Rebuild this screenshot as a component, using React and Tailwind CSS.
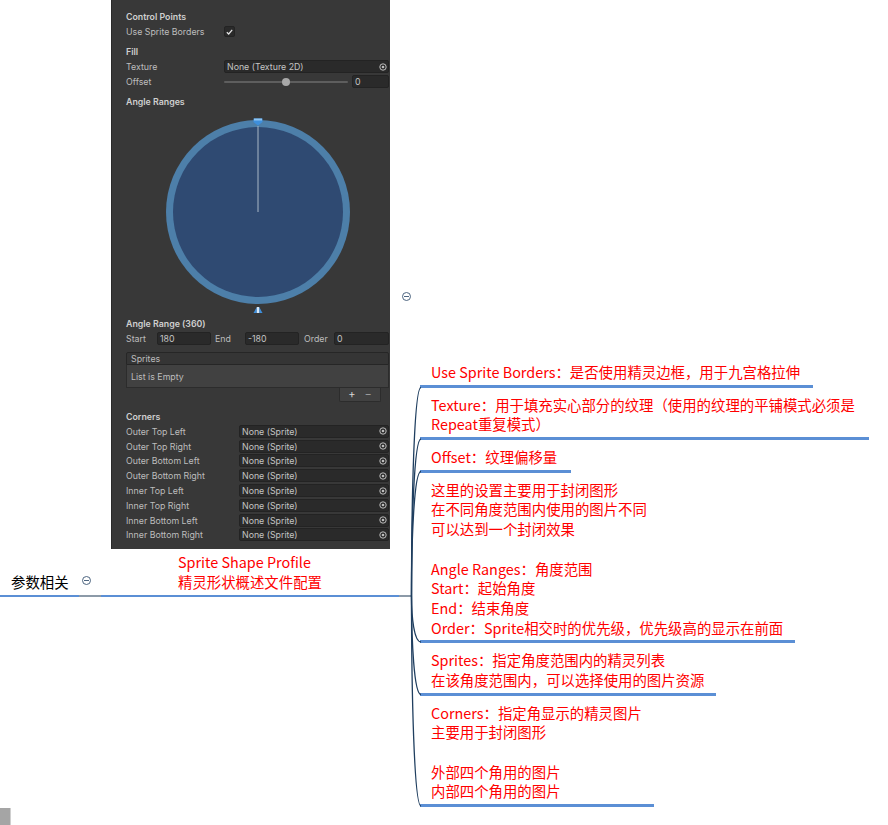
import React from 'react';

const Picker = () => (
  <svg width="8" height="8" viewBox="0 0 8 8" className="shrink-0">
    <circle cx="4" cy="4" r="3.2" fill="none" stroke="#bdbdbd" strokeWidth="1" />
    <circle cx="4" cy="4" r="1.3" fill="#bdbdbd" />
  </svg>
);

const Field = ({ children, className = '', picker = false }) => (
  <div className={`h-[13px] bg-[#2a2a2a] border border-[#232323] rounded-[2px] pl-[2px] pr-[1px] flex items-center justify-between text-[#c4c4c4] ${className}`}>
    <span className="whitespace-nowrap leading-[11px]">{children}</span>
    {picker && <Picker />}
  </div>
);

const Heading = ({ children, className = '' }) => (
  <div className={`h-[15px] flex items-center font-semibold text-[#cfcfcf] ${className}`}>{children}</div>
);

const CollapseDot = ({ className = '' }) => (
  <div className={`w-[9px] h-[9px] rounded-full border border-[#4d6580] bg-white flex items-center justify-center ${className}`}>
    <div className="w-[5px] h-px bg-[#4d6580]" />
  </div>
);

const corners = [
  'Outer Top Left',
  'Outer Top Right',
  'Outer Bottom Left',
  'Outer Bottom Right',
  'Inner Top Left',
  'Inner Top Right',
  'Inner Bottom Left',
  'Inner Bottom Right',
];

const Inspector = () => (
  <div className="ml-[111px] w-[279px] h-[549px] shrink-0 bg-[#383838] border-l border-[#2a2a2a] pl-[14px] pr-[1px] pt-[9px] font-['Inter','Noto_Sans',sans-serif] text-[8.8px] text-[#bdbdbd] leading-[11px]">
    <Heading>Control Points</Heading>
    <div className="h-[15px] flex items-center">
      <span className="w-[98px]">Use Sprite Borders</span>
      <div className="w-[11px] h-[11px] bg-[#2a2a2a] border border-[#232323] rounded-[2px] flex items-center justify-center">
        <svg width="7" height="6" viewBox="0 0 7 6">
          <path d="M0.8 3.2 L2.7 5 L6.2 0.8" fill="none" stroke="#e6e6e6" strokeWidth="1.2" />
        </svg>
      </div>
    </div>
    <Heading className="mt-[5px]">Fill</Heading>
    <div className="h-[15px] flex items-center">
      <span className="w-[98px]">Texture</span>
      <Field className="w-[165px]" picker>None (Texture 2D)</Field>
    </div>
    <div className="h-[15px] flex items-center">
      <span className="w-[98px]">Offset</span>
      <div className="relative w-[124px] h-[2px] bg-[#5e5e5e] rounded-full">
        <div className="absolute left-[58px] top-[-3px] w-[8px] h-[8px] rounded-full bg-[#a8a8a8]" />
      </div>
      <Field className="ml-[4px] w-[37px]">0</Field>
    </div>
    <Heading className="mt-[5px]">Angle Ranges</Heading>
    <svg width="264" height="207" viewBox="0 0 264 207" className="block">
      <circle cx="132" cy="103" r="92" fill="#4d7fa9" />
      <circle cx="132" cy="103" r="85" fill="#2f4a72" />
      <line x1="132" y1="17" x2="132" y2="103" stroke="#a9b7c6" strokeWidth="1" />
      <polygon points="127.5,9.5 136.5,9.5 136.5,13 132,16.5 127.5,13" fill="#3e8fdc" />
      <rect x="128" y="9.5" width="8" height="2" fill="#8cc4f4" />
      <polygon points="127.5,204 130.8,198 130.8,204" fill="#3e8fdc" />
      <polygon points="133.2,198 136.5,204 133.2,204" fill="#3e8fdc" />
      <rect x="130.8" y="198" width="2.4" height="6" fill="#d8e8f8" />
    </svg>
    <Heading>Angle Range (360)</Heading>
    <div className="h-[15px] flex items-center">
      <span className="w-[31px]">Start</span>
      <Field className="w-[54px]">180</Field>
      <span className="ml-[4px] w-[30px]">End</span>
      <Field className="w-[54px]">-180</Field>
      <span className="ml-[5px] w-[30px]">Order</span>
      <Field className="w-[55px]">0</Field>
    </div>
    <div className="mt-[6px] w-[263px]">
      <div className="h-[13px] bg-[#353535] border border-[#262626] rounded-t-[2px] pl-[4px] flex items-center">Sprites</div>
      <div className="h-[23px] bg-[#414141] border-x border-b border-[#2c2c2c] pl-[4px] flex items-center">List is Empty</div>
      <div className="ml-auto mr-[8px] w-[42px] h-[14px] bg-[#414141] border-x border-b border-[#2c2c2c] rounded-b-[2px] flex items-center justify-center gap-[9px] text-[#d8d8d8] text-[11px]">
        <span>+</span>
        <span className="text-[#9a9a9a]">−</span>
      </div>
    </div>
    <Heading className="mt-[7px]">Corners</Heading>
    {corners.map((c) => (
      <div key={c} className="h-[14.8px] flex items-center">
        <span className="w-[113px]">{c}</span>
        <Field className="w-[150px]" picker>None (Sprite)</Field>
      </div>
    ))}
  </div>
);

const notes = [
  { w: 'w-[393px]', lines: ['Use Sprite Borders：是否使用精灵边框，用于九宫格拉伸'] },
  { w: 'w-[449px]', lines: ['Texture：用于填充实心部分的纹理（使用的纹理的平铺模式必须是', 'Repeat重复模式）'] },
  { w: 'w-[151px]', lines: ['Offset：纹理偏移量'] },
  {
    w: 'w-[375px]',
    lines: [
      '这里的设置主要用于封闭图形',
      '在不同角度范围内使用的图片不同',
      '可以达到一个封闭效果',
      '',
      'Angle Ranges：角度范围',
      'Start：起始角度',
      'End：结束角度',
      'Order：Sprite相交时的优先级，优先级高的显示在前面',
    ],
  },
  { w: 'w-[296px]', lines: ['Sprites：指定角度范围内的精灵列表', '在该角度范围内，可以选择使用的图片资源'] },
  { w: 'w-[234px]', lines: ['Corners：指定角显示的精灵图片', '主要用于封闭图形', '', '外部四个角用的图片', '内部四个角用的图片'] },
];

// underline centres on the right, used by the connector drawing
const targets = [387.5, 439, 471.5, 642, 694.5, 806];

const Connectors = () => (
  <svg width="888" height="825" className="absolute left-0 top-0 pointer-events-none">
    {targets.map((t) => {
      const up = t < 596;
      const c1 = up ? 596 - (596 - t) * 0.45 : 596 + (t - 596) * 0.45;
      return (
        <path
          key={t}
          d={`M 411.5 596 C 411.5 ${c1}, 414 ${t}, 421 ${t}`}
          fill="none"
          stroke="#1f3e5f"
          strokeWidth="1.3"
        />
      );
    })}
  </svg>
);

export default function App() {
  return (
    <div className="relative w-[888px] h-[825px] bg-white overflow-hidden flex font-['Noto_Sans_CJK_SC',sans-serif] text-[14.4px] leading-[19.7px]">
      <div className="w-[412px] shrink-0 flex flex-col">
        <Inspector />
        <div className="mt-[3px] flex items-end">
          <div className="w-[79px] pl-[11px] pb-[3px] border-b-2 border-[#5b8fd5] text-black whitespace-nowrap">参数相关</div>
          <div className="w-[22px] h-[22px] border-b-2 border-[#8c9aa8] flex items-start">
            <CollapseDot className="ml-[3px] mt-[1px]" />
          </div>
          <div className="w-[298px] pl-[77px] pb-[3.5px] border-b-2 border-[#5b8fd5] text-[#ff0000] whitespace-nowrap">
            <div>Sprite Shape Profile</div>
            <div>精灵形状概述文件配置</div>
          </div>
          <div className="w-[13px] border-b-2 border-[#8c9aa8]" />
        </div>
        <div className="mt-auto w-[11px] h-[17px] bg-[#a5a5a5] border-r border-[#cfcfcf]" />
      </div>
      <div className="pt-[355px] pl-[8px] flex flex-col items-start text-[#ff0000]">
        {notes.map((n, i) => (
          <div key={i} className={`${n.w} pl-[11px] pt-[7px] pb-[3px] border-b-[3px] border-[#5b8fd5] whitespace-nowrap`}>
            {n.lines.map((l, j) => (
              <div key={j} className="h-[19.7px]">{l}</div>
            ))}
          </div>
        ))}
      </div>
      <CollapseDot className="absolute left-[402px] top-[292px]" />
      <Connectors />
    </div>
  );
}
